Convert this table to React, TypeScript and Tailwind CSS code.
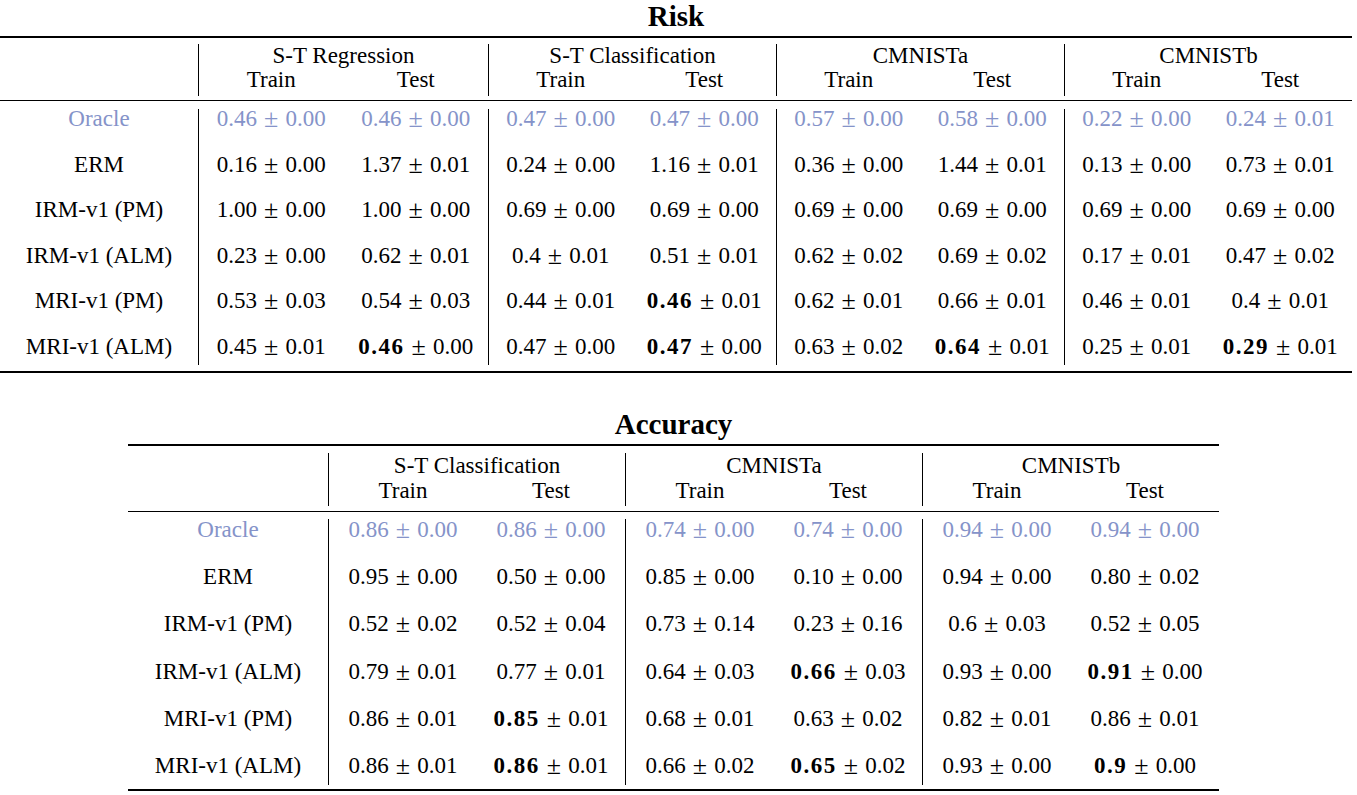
import React from "react";

type Cell = { v: string; e: string; b?: boolean };
type Row = { label: string; oracle?: boolean; cells: Cell[] };

const c = (s: string): Cell => {
  const bold = s.startsWith("*");
  const t = bold ? s.slice(1) : s;
  const [v, e] = t.split("|");
  return { v, e, b: bold };
};

const mk = (label: string, vals: string[], oracle = false): Row => ({
  label,
  oracle,
  cells: vals.map(c),
});

const riskRows: Row[] = [
  mk("Oracle", ["0.46|0.00", "0.46|0.00", "0.47|0.00", "0.47|0.00", "0.57|0.00", "0.58|0.00", "0.22|0.00", "0.24|0.01"], true),
  mk("ERM", ["0.16|0.00", "1.37|0.01", "0.24|0.00", "1.16|0.01", "0.36|0.00", "1.44|0.01", "0.13|0.00", "0.73|0.01"]),
  mk("IRM-v1 (PM)", ["1.00|0.00", "1.00|0.00", "0.69|0.00", "0.69|0.00", "0.69|0.00", "0.69|0.00", "0.69|0.00", "0.69|0.00"]),
  mk("IRM-v1 (ALM)", ["0.23|0.00", "0.62|0.01", "0.4|0.01", "0.51|0.01", "0.62|0.02", "0.69|0.02", "0.17|0.01", "0.47|0.02"]),
  mk("MRI-v1 (PM)", ["0.53|0.03", "0.54|0.03", "0.44|0.01", "*0.46|0.01", "0.62|0.01", "0.66|0.01", "0.46|0.01", "0.4|0.01"]),
  mk("MRI-v1 (ALM)", ["0.45|0.01", "*0.46|0.00", "0.47|0.00", "*0.47|0.00", "0.63|0.02", "*0.64|0.01", "0.25|0.01", "*0.29|0.01"]),
];

const accRows: Row[] = [
  mk("Oracle", ["0.86|0.00", "0.86|0.00", "0.74|0.00", "0.74|0.00", "0.94|0.00", "0.94|0.00"], true),
  mk("ERM", ["0.95|0.00", "0.50|0.00", "0.85|0.00", "0.10|0.00", "0.94|0.00", "0.80|0.02"]),
  mk("IRM-v1 (PM)", ["0.52|0.02", "0.52|0.04", "0.73|0.14", "0.23|0.16", "0.6|0.03", "0.52|0.05"]),
  mk("IRM-v1 (ALM)", ["0.79|0.01", "0.77|0.01", "0.64|0.03", "*0.66|0.03", "0.93|0.00", "*0.91|0.00"]),
  mk("MRI-v1 (PM)", ["0.86|0.01", "*0.85|0.01", "0.68|0.01", "0.63|0.02", "0.82|0.01", "0.86|0.01"]),
  mk("MRI-v1 (ALM)", ["0.86|0.01", "*0.86|0.01", "0.66|0.02", "*0.65|0.02", "0.93|0.00", "*0.9|0.00"]),
];

function Val({ cell, oracle }: { cell: Cell; oracle?: boolean }) {
  return (
    <div
      className={`h-[20px] leading-[20px] flex justify-center items-center whitespace-nowrap ${
        oracle ? "text-[#8593c9]" : "text-black"
      }`}
    >
      <span className={cell.b ? "font-bold tracking-[1.5px]" : ""}>{cell.v}</span>
      <span className="text-[26px] leading-[20px] mx-[7px]">±</span>
      <span>{cell.e}</span>
    </div>
  );
}

function Table({
  title,
  groups,
  groupWidths,
  labelWidth,
  rows,
  rowGap,
  variant,
}: {
  title: string;
  groups: string[];
  groupWidths: string[];
  labelWidth: string;
  rows: Row[];
  rowGap: string;
  variant: "risk" | "acc";
}) {
  const risk = variant === "risk";
  return (
    <div className="flex flex-col">
      <div className="h-[36px] leading-[32px] text-center font-bold text-[29px] text-black">{title}</div>
      <div className="h-[2px] bg-black" />
      {/* header */}
      <div className={`flex ${risk ? "pt-[6px] pb-[4px]" : "pt-[7px] pb-[5px]"}`}>
        <div className={labelWidth} />
        {groups.map((g, i) => (
          <div
            key={g}
            className={`${groupWidths[i]} border-l border-black flex flex-col ${
              risk ? "pb-[4px] leading-[24px]" : "pb-[3px] leading-[25px]"
            }`}
          >
            <div className="text-center">{g}</div>
            <div className="grid grid-cols-2">
              <div className="text-center">Train</div>
              <div className="text-center">Test</div>
            </div>
          </div>
        ))}
      </div>
      <div className="h-[1px] bg-black" />
      {/* body */}
      <div className={`flex ${risk ? "pt-[8px] pb-[6px]" : "pt-[7px] pb-[4px]"}`}>
        <div className={`${labelWidth} flex flex-col ${rowGap} ${risk ? "" : "pt-[1px]"}`}>
          {rows.map((r) => (
            <div
              key={r.label}
              className={`h-[20px] leading-[20px] text-center whitespace-nowrap ${
                r.oracle ? "text-[#8593c9]" : "text-black"
              }`}
            >
              {r.label}
            </div>
          ))}
        </div>
        {groups.map((g, gi) => (
          <div
            key={g}
            className={`${groupWidths[gi]} border-l border-black grid grid-cols-2 content-start ${rowGap} ${
              risk ? "pb-[8px]" : "pt-[1px] pb-[9px]"
            }`}
          >
            {rows.map((r) => (
              <React.Fragment key={r.label}>
                <Val cell={r.cells[gi * 2]} oracle={r.oracle} />
                <Val cell={r.cells[gi * 2 + 1]} oracle={r.oracle} />
              </React.Fragment>
            ))}
          </div>
        ))}
      </div>
      <div className="h-[2px] bg-black" />
    </div>
  );
}

export default function App() {
  return (
    <div className="w-[1357px] h-[795px] bg-white font-['Liberation_Serif',serif] text-[23px] text-black overflow-hidden">
      <div className="w-[1352px]">
        <Table
          title="Risk"
          groups={["S-T Regression", "S-T Classification", "CMNISTa", "CMNISTb"]}
          groupWidths={["w-[290px]", "w-[288px]", "w-[288px]", "w-[288px]"]}
          labelWidth="w-[198px]"
          rows={riskRows}
          rowGap="gap-y-[25.6px]"
          variant="risk"
        />
      </div>
      <div className="w-[1091px] ml-[128px] mt-[35px]">
        <Table
          title="Accuracy"
          groups={["S-T Classification", "CMNISTa", "CMNISTb"]}
          groupWidths={["w-[297px]", "w-[297px]", "w-[297px]"]}
          labelWidth="w-[200px]"
          rows={accRows}
          rowGap="gap-y-[27.2px]"
          variant="acc"
        />
      </div>
    </div>
  );
}
